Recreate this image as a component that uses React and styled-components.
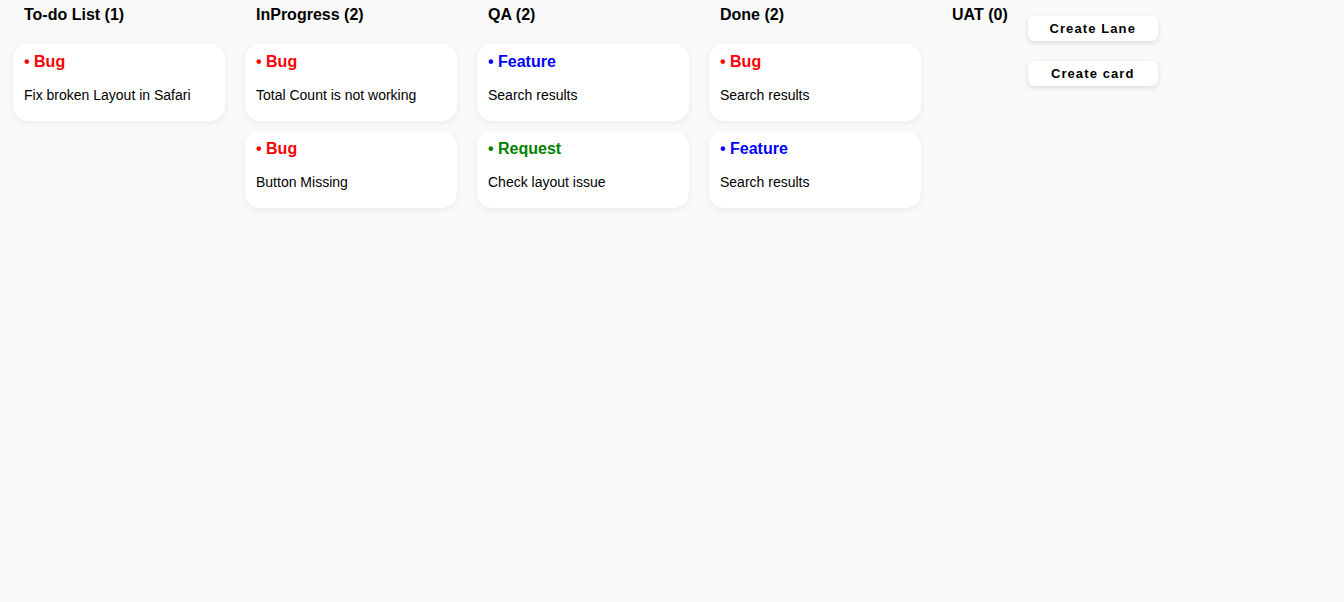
import React from "react";
import styled, { createGlobalStyle } from "styled-components";

const GlobalStyle = createGlobalStyle`
  html, body {
    margin: 0;
    padding: 0;
    background: #f9f9f9;
    font-family: "Liberation Sans", Arial, sans-serif;
  }
  body {
    min-height: 100vh;
  }
`;

const Board = styled.div`
  display: flex;
  align-items: flex-start;
  gap: 20px;
  padding: 6px 0 0 13px;
`;

const Lane = styled.div`
  display: flex;
  flex-direction: column;
`;

const LaneTitle = styled.div`
  font-size: 16px;
  font-weight: bold;
  line-height: 18px;
  padding-left: 11px;
  margin-bottom: 20px;
  color: #000;
`;

const CardList = styled.div`
  display: flex;
  flex-direction: column;
  gap: 10px;
`;

const Card = styled.div`
  width: 212px;
  box-sizing: border-box;
  padding: 9px 11px 18px;
  background: #fff;
  border-radius: 15px;
  box-shadow: 0 2px 6px rgba(0, 0, 0, 0.06);
`;

const CardTag = styled.div`
  font-size: 16px;
  font-weight: bold;
  line-height: 18px;
  margin-bottom: 16px;
  color: ${(props) => props.color};
`;

const CardText = styled.div`
  font-size: 14px;
  line-height: 16px;
  color: #000;
`;

const Actions = styled.div`
  display: flex;
  flex-direction: column;
  gap: 20px;
  margin-top: 10px;
`;

const ActionButton = styled.button`
  width: 130px;
  height: 25px;
  border: none;
  border-radius: 6px;
  background: #fff;
  box-shadow: 0 2px 5px rgba(0, 0, 0, 0.12);
  font-family: "Liberation Sans", Arial, sans-serif;
  font-size: 13px;
  font-weight: bold;
  letter-spacing: 1.1px;
  color: #000;
  cursor: pointer;
`;

const tagColors = {
  Bug: "#ff0000",
  Feature: "#0000ff",
  Request: "#008000",
};

const lanes = [
  {
    id: 1,
    title: "To-do List",
    cards: [{ id: 1, tag: "Bug", text: "Fix broken Layout in Safari" }],
  },
  {
    id: 2,
    title: "InProgress",
    cards: [
      { id: 2, tag: "Bug", text: "Total Count is not working" },
      { id: 3, tag: "Bug", text: "Button Missing" },
    ],
  },
  {
    id: 3,
    title: "QA",
    cards: [
      { id: 4, tag: "Feature", text: "Search results" },
      { id: 5, tag: "Request", text: "Check layout issue" },
    ],
  },
  {
    id: 4,
    title: "Done",
    cards: [
      { id: 6, tag: "Bug", text: "Search results" },
      { id: 7, tag: "Feature", text: "Search results" },
    ],
  },
  { id: 5, title: "UAT", cards: [] },
];

function App() {
  return (
    <>
      <GlobalStyle />
      <Board>
        {lanes.map((lane) => (
          <Lane key={lane.id}>
            <LaneTitle>
              {lane.title} ({lane.cards.length})
            </LaneTitle>
            <CardList>
              {lane.cards.map((card) => (
                <Card key={card.id}>
                  <CardTag color={tagColors[card.tag]}>• {card.tag}</CardTag>
                  <CardText>{card.text}</CardText>
                </Card>
              ))}
            </CardList>
          </Lane>
        ))}
        <Actions>
          <ActionButton>Create Lane</ActionButton>
          <ActionButton>Create card</ActionButton>
        </Actions>
      </Board>
    </>
  );
}

export default App;
